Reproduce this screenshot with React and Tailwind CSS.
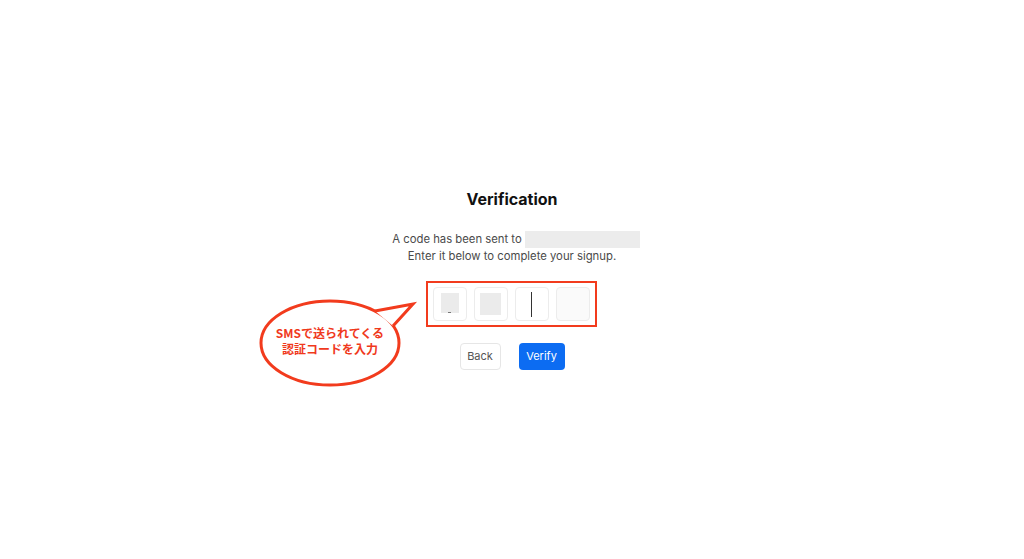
import React from "react";

const CodeBox = ({ children, className = "" }) => (
  <div
    className={`w-[34px] h-[34px] rounded-[4px] border border-[#ececec] flex items-center justify-center ${className}`}
  >
    {children}
  </div>
);

const Bubble = () => (
  <div className="absolute left-[255px] top-[290px] w-[165px] h-[100px]">
    <svg width="165" height="100" viewBox="0 0 165 100" className="absolute inset-0">
      <ellipse cx="75" cy="53" rx="69" ry="42" fill="#fff" stroke="#f23b1d" strokeWidth="3" />
      <path d="M120 21 L158 14 L138 36" fill="#fff" stroke="#f23b1d" strokeWidth="3" strokeLinejoin="miter" />
    </svg>
    <div className="absolute left-0 top-[35px] w-[150px] text-center text-[12px] leading-[16px] font-bold text-[#f0391c] [font-family:'Noto_Sans_CJK_JP',sans-serif]">
      <p>SMSで送られてくる</p>
      <p>認証コードを入力</p>
    </div>
  </div>
);

export default function App() {
  return (
    <div className="relative w-full h-[559px] bg-white [font-family:Inter,'Noto_Sans',sans-serif]">
      <div className="flex flex-col items-center pt-[187px]">
        <h1 className="text-[16px] leading-[24px] font-bold text-[#111]">Verification</h1>

        <div className="mt-[20px] flex flex-col items-center text-[11.3px] leading-[17px] text-[#4a4a4a]">
          <p className="flex items-center pl-[8px]">
            A code has been sent to
            <span className="ml-[3px] inline-block w-[115px] h-[17px] bg-[#ececec]" />
          </p>
          <p>Enter it below to complete your signup.</p>
        </div>

        <div className="mt-[16px] -ml-[2px] flex gap-[7px] px-[5px] py-[4px] border-2 border-[#f23b1d]">
          <CodeBox className="relative">
            <span className="w-[18px] h-[20px] bg-[#ebebeb] -mt-[2px]" />
            <span className="absolute left-[14px] top-[24px] w-[3px] h-[1px] bg-[#777]" />
          </CodeBox>
          <CodeBox>
            <span className="w-[21px] h-[22px] bg-[#ebebeb]" />
          </CodeBox>
          <CodeBox>
            <span className="w-[1.5px] h-[25px] bg-[#333] mt-[1px]" />
          </CodeBox>
          <CodeBox className="bg-[#fafafa]" />
        </div>

        <div className="mt-[16px] flex gap-[18px]">
          <button className="w-[41px] h-[27px] rounded-[4px] border border-[#e6e6e6] bg-white text-[11px] text-[#555]">
            Back
          </button>
          <button className="w-[46px] h-[27px] rounded-[4px] bg-[#0c6cf2] text-[11px] text-white">
            Verify
          </button>
        </div>
      </div>

      <Bubble />
    </div>
  );
}
